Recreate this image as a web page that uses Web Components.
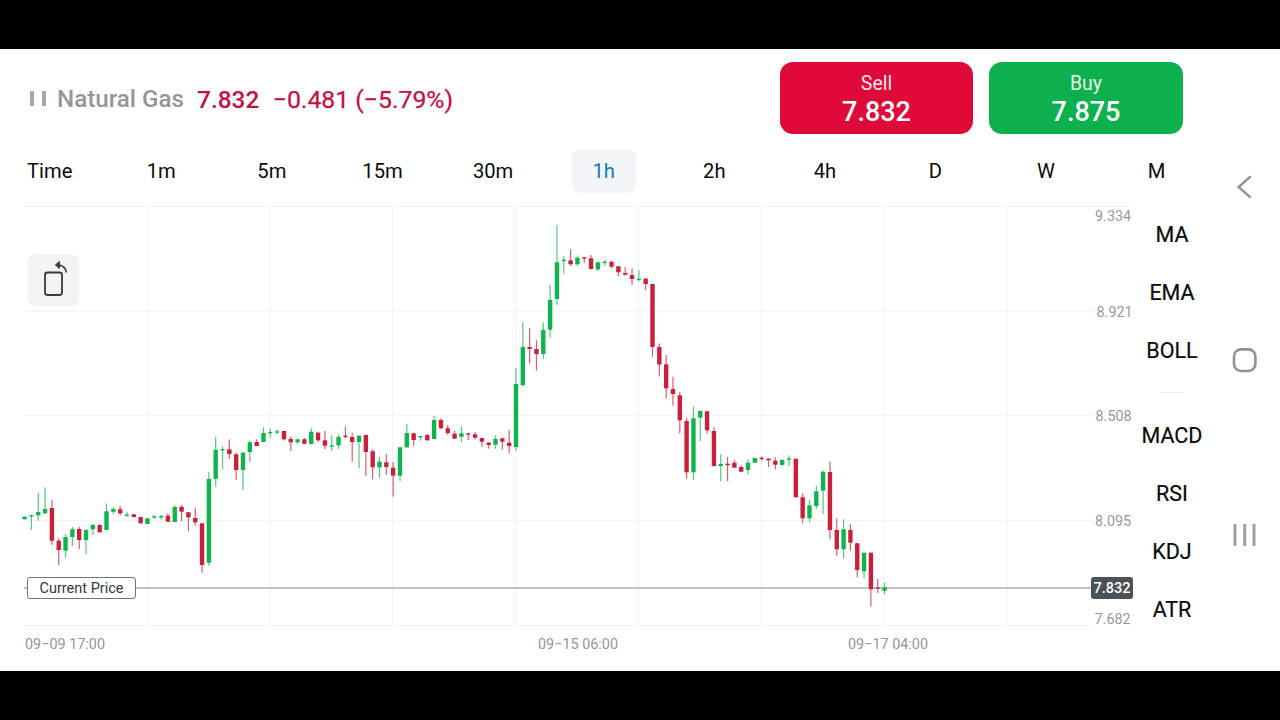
<!DOCTYPE html>
<html>
<head>
<meta charset="utf-8">
<title>Natural Gas</title>
<style>
  html, body { margin: 0; padding: 0; background: #000; }
  body { width: 1280px; height: 720px; overflow: hidden; font-family: Roboto, "Liberation Sans", sans-serif; }
</style>
</head>
<body>
<trade-screen></trade-screen>
<script>
// g/r, wick top, body top, body bottom, wick bottom (screen px), read off the reference
const CANDLES = [
  ['g',516.7,516.7,519.3,519.3],['g',514.7,515,516,530],['g',492.7,512,515.3,520.7],['g',487.3,509,513.3,514],
  ['r',500,508,540.7,545],['r',538.3,540.7,550,565],['g',534,537,550.7,557.7],['g',526.7,529.3,537,546],
  ['r',526.7,529,540,549.3],['g',529.3,530,540,554],['g',524,525,529.3,535],['r',524.3,525,532.3,532.3],
  ['g',503.3,511.3,530,530],['g',507.3,509,511.7,514.3],['r',505.7,509.3,513.3,515.3],['g',512,514.5,515,516.7],
  ['r',514,514.3,517,517.7],['r',516.7,517,523.3,523.7],['g',518,518.3,524,524.3],['g',515,516.3,517,518.7],
  ['g',515,516,516.7,519.7],['r',513.3,515.7,521.7,522],['g',505.3,507,522,522.3],['r',505,507,511.7,521],
  ['r',512,512.3,517.3,531.3],['r',507.7,518,522.3,525.7],['r',523.3,523.3,565,572.7],['g',471.7,479,562.7,566],
  ['g',436.7,449.7,478.7,486.7],['g',446.7,449,449.7,469],['r',439.3,449.3,454,459],['r',452.7,454.3,470,480],
  ['g',451.7,452.7,470,490],['g',440.7,442.3,452,462.3],['r',439.3,442,446,446],['g',427.3,433,442,442.3],
  ['g',428.3,432,432.7,437.7],['g',429,431.3,432,434],['r',431,431,439.3,440.7],['r',436.7,439,442.3,451],
  ['g',439,439.3,442.3,444.3],['r',438,439.3,443.7,444.3],['g',428.3,431.7,444,444.7],['r',431.7,432.7,440.3,442],
  ['r',431,440.3,445.7,449],['g',435.3,445.3,446,450.7],['g',434.3,437,445.3,449],['r',426.7,435.7,437,438.3],
  ['r',432.7,437,442,461.7],['g',435.3,435.7,442,468.3],['r',434.7,435,452,476],['r',449.3,451.3,467.3,479.3],
  ['g',456.7,461.7,467.3,478],['r',454,462.3,467,474.7],['r',462,467.7,475.7,496.7],['g',447.3,447.3,475.7,481.3],
  ['g',424.3,433,447.3,447.7],['r',433,433.3,440,445.7],['g',436,436,436.7,440.7],['r',434,435,440.3,440.7],
  ['g',416,420,439,439.3],['r',418.3,420,428.3,429],['r',425,428.3,433,435.3],['r',430.7,433.7,438.7,439],
  ['g',426.3,433.3,436.7,442],['r',433,433.3,434,440],['r',432,434.3,437.7,439.3],['r',438,438,441.7,446.7],
  ['r',442,442.7,445,448.7],['g',435.3,439,444.7,448.7],['r',437.7,438.3,441.7,449.7],['r',430.3,442.7,446,453.3],
  ['g',368,384,447,451],['g',322.3,347,385,387],['r',328.3,347,349,363.3],['r',340.3,349,354,370.7],
  ['g',322.3,330,354,359],['g',285,300,329.7,337.7],['g',225,262.3,299,305],['g',256.3,259.7,260.7,273.7],
  ['r',249,260.3,264.3,265.7],['g',255.7,257.7,264.3,265.7],['r',257.3,257.3,258.3,262.7],['r',255,258.3,269,269.3],
  ['g',261.3,262.3,269.3,271],['g',259.7,261.7,262.3,265.7],['r',261.3,261.7,266.7,268.3],['r',266,266.3,272.3,276.3],
  ['r',267,273,274.7,275.7],['r',268.3,275,279,285],['g',270.3,278.7,279.7,281],['r',277.7,278.7,284,290],
  ['r',284,284,347,356.7],['r',343.5,347,364.5,376.5],['r',355,364.3,388.3,398.7],['r',376.7,389,394,405.7],
  ['r',392,395.3,420.3,433.3],['r',418.3,421,472.3,478.7],['g',406.7,418.3,472.3,480],['g',411,411,417.7,441.3],
  ['r',410.7,411.3,430.3,433.3],['r',427.3,431,466,466.7],['g',454.3,464,466,481.3],['r',457,463.7,465.3,481.3],
  ['r',460,462.7,467.7,468],['r',465.3,467,471.7,472],['g',459.3,462.7,470,474.7],['g',457.3,458,462.7,463],
  ['r',456.3,457.7,458.7,460.7],['r',458.3,458.7,460.3,467],['r',457.3,460.7,464.7,469.3],['g',459.3,460,465,465.3],
  ['g',455.3,458.3,459.3,466.3],['r',458.7,458.7,497.3,497.3],['r',493.3,497.3,518.3,523.3],['g',500,505.3,518.3,522.3],
  ['g',486,491.3,506,509],['g',470.7,471.7,490.7,514],['r',461.7,472,530,539.3],['r',518.7,530,549.3,556],
  ['g',519.3,529.3,549.3,558.7],['r',524,530,542.7,550.7],['r',543.3,543.3,570,577.3],['g',552.7,552.7,571.3,578.3],
  ['r',552.7,552.7,589.3,606.7],['r',579,587.5,588.5,593],['g',582.7,587.3,590.7,594]
];

class QuoteHeader extends HTMLElement {
  connectedCallback() {
    this.attachShadow({ mode: "open" }).innerHTML = `
      <style>
        :host { display: flex; align-items: center; height: 98px; padding-left: 30px; box-sizing: border-box; }
        .pause { width: 16px; height: 15px; display: flex; justify-content: space-between; margin: 0 11px 0 0; }
        .pause i { width: 3.6px; background: #a8a8a8; }
        .text { display: flex; align-items: center; padding-top: 2px; }
        .name { font-size: 24.2px; font-weight: 500; color: #969696; margin-right: 13px; }
        .price { font-size: 24.4px; font-weight: 500; color: #c4113f; margin-right: 13.5px; }
        .change { font-size: 24.8px; color: #c4113f; -webkit-text-stroke: .25px #c4113f; }
        .btns { margin-left: auto; margin-right: 29px; display: flex; gap: 16px; }
      </style>
      <div class="pause"><i></i><i></i></div>
      <div class="text">
        <span class="name"><slot name="name"></slot></span>
        <span class="price"><slot name="price"></slot></span>
        <span class="change"><slot name="change"></slot></span>
      </div>
      <div class="btns"><slot></slot></div>
    `;
  }
}
customElements.define("quote-header", QuoteHeader);

class TradeButton extends HTMLElement {
  connectedCallback() {
    this.attachShadow({ mode: "open" }).innerHTML = `
      <style>
        :host { display: flex; flex-direction: column; align-items: center; width: ${this.getAttribute("width")}px; height: 72.5px; box-sizing: border-box;
                padding-top: 10px; border-radius: 13px; color: #fff; background: ${this.getAttribute("color")}; }
        .label { font-size: 19.5px; line-height: 23px; color: rgba(255,255,255,.92); }
        .value { font-size: 27px; line-height: 35px; font-weight: 500; }
      </style>
      <span class="label">${this.getAttribute("label")}</span>
      <span class="value">${this.getAttribute("value")}</span>
    `;
  }
}
customElements.define("trade-button", TradeButton);

class TimeTabs extends HTMLElement {
  connectedCallback() {
    const active = this.getAttribute("active");
    const tabs = this.getAttribute("items").split(",");
    this.attachShadow({ mode: "open" }).innerHTML = `
      <style>
        :host { display: grid; grid-template-columns: 79px repeat(10, 110.6px); height: 48px; padding-left: 27px; align-items: center; }
        span { font-size: 20.2px; line-height: 44px; height: 44px; text-align: center; color: #0b0b0b; justify-self: center; }
        span:first-of-type { justify-self: start; }
        .on { width: 64px; background: #f4f5f7; border-radius: 9px; color: #1976c5; }
      </style>
      ${tabs.map(t => `<span class="${t === active ? "on" : ""}">${t}</span>`).join("")}
    `;
  }
}
customElements.define("time-tabs", TimeTabs);

class CandleChart extends HTMLElement {
  connectedCallback() {
    const GREEN = "#0fb44e", RED = "#c9213c";
    let grid = "";
    [206.5, 311, 415.5, 520.5, 625.5].forEach(y => { grid += `<line x1="24" x2="1133" y1="${y}" y2="${y}"/>`; });
    [147, 269.5, 392.5, 515.5, 638.5, 761, 884, 1007].forEach(x => { grid += `<line x1="${x}" x2="${x}" y1="206" y2="626"/>`; });
    let bars = "";
    CANDLES.forEach((c, i) => {
      const x = 24.6 + 6.825 * i;
      const col = c[0] === "g" ? GREEN : RED;
      const h = Math.max(c[3] - c[2], 1.4);
      const w = c[3] - c[2] < 1.6 ? 4 : 4.4;
      bars += `<rect x="${(x - .6).toFixed(2)}" y="${c[1]}" width="1.2" height="${(c[4] - c[1]).toFixed(1)}" fill="${col}" opacity=".72"/>`;
      bars += `<rect x="${(x - w / 2).toFixed(2)}" y="${c[2]}" width="${w}" height="${h.toFixed(1)}" fill="${col}"/>`;
    });
    const ticks = [["9.334", 216, 1131], ["8.921", 311.5, 1132.5], ["8.508", 416, 1131.5], ["8.095", 521, 1131], ["7.682", 618.5, 1130.5]];
    this.attachShadow({ mode: "open" }).innerHTML = `
      <style>
        :host { display: block; position: relative; width: 1133px; height: 435px; flex: none; }
        svg { display: block; }
        .grid line { stroke: #f1f2f3; stroke-width: 1; }
        .bars { filter: blur(.35px); }
        .tick { position: absolute; font-size: 14.3px; line-height: 16px; color: #999; background: #fff; padding-left: 2px; }
        .now { position: absolute; left: 27px; top: 382px; width: 109px; height: 22px; box-sizing: border-box; text-align: center;
               border: 1px solid #70757a; border-radius: 3px; background: #fff; color: #33383c; font-size: 14.5px; line-height: 21px; }
        .tag { position: absolute; left: 1091px; top: 382px; width: 42px; height: 22px; border-radius: 3px; text-align: center;
               background: #4b5157; color: #fff; font-size: 14.5px; font-weight: 500; line-height: 23px; }
        .flip { position: absolute; left: 28px; top: 59px; width: 51px; height: 52px; border-radius: 8px; background: #f3f3f3; }
      </style>
      <svg width="1133" height="435" viewBox="0 195 1133 435">
        <g class="grid">${grid}</g>
        <line x1="24" x2="1091" y1="588" y2="588" stroke="#85888b" stroke-width="1.2"/>
        <g class="bars">${bars}</g>
      </svg>
      ${ticks.map(t => `<span class="tick" style="right:${1133 - t[2]}px;top:${t[1] - 195 - 8}px">${t[0]}</span>`).join("")}
      <span class="now">Current Price</span>
      <span class="tag">7.832</span>
      <div class="flip">
        <svg width="51" height="52" viewBox="28 254 51 52" fill="none" stroke="#3a3a3a">
          <rect x="45" y="272.5" width="17" height="22.5" rx="2.5" stroke-width="1.8"/>
          <path d="M66.3 272.6C66.2 268 62.5 265 57.5 265" stroke-width="1.7"/>
          <path d="M59.4 261.5L55.4 265L59.4 268.5Z" fill="#3a3a3a" stroke-width="1"/>
        </svg>
      </div>
    `;
  }
}
customElements.define("candle-chart", CandleChart);

class IndicatorList extends HTMLElement {
  connectedCallback() {
    const groups = this.getAttribute("items").split("|").map(g => g.split(","));
    const row = n => `<span>${n}</span>`;
    this.attachShadow({ mode: "open" }).innerHTML = `
      <style>
        :host { display: flex; flex-direction: column; align-items: center; width: 78px; padding-top: 11px; box-sizing: border-box; }
        span { height: 57.8px; flex: none; line-height: 58px; font-size: 21.5px; color: #0a0a0a; -webkit-text-stroke: .2px #0a0a0a; }
        hr { width: 24px; height: 1px; border: 0; background: #f0f0f0; margin: 13px 0 14px; flex: none; }
      </style>
      ${groups[0].map(row).join("")}<hr>${groups[1].map(row).join("")}
    `;
  }
}
customElements.define("indicator-list", IndicatorList);

class NavRail extends HTMLElement {
  connectedCallback() {
    this.attachShadow({ mode: "open" }).innerHTML = `
      <style>
        :host { display: flex; flex-direction: column; width: 66px; padding-top: 51px; box-sizing: border-box; }
        div { height: 174px; display: flex; align-items: center; justify-content: center; }
        svg { fill: none; stroke: #929292; display: block; }
      </style>
      <div><svg width="30" height="30" viewBox="0 0 30 30"><path d="M20.7 4.3L8.6 15L20.7 25.7" stroke-width="2.4"/></svg></div>
      <div><svg width="30" height="30" viewBox="0 0 30 30"><rect x="4" y="3.4" width="21.4" height="21.6" rx="7" stroke-width="2.6"/></svg></div>
      <div><svg width="30" height="30" viewBox="0 0 30 30"><path d="M5 4V26M14.7 4V26M24 4V26" stroke-width="3" stroke="#a0a0a0"/></svg></div>
    `;
  }
}
customElements.define("nav-rail", NavRail);

class TradeScreen extends HTMLElement {
  connectedCallback() {
    this.attachShadow({ mode: "open" }).innerHTML = `
      <style>
        :host { display: flex; flex-direction: column; width: 1280px; height: 720px; background: #000; }
        .bar { height: 49px; flex: none; background: #000; }
        .panel { height: 622px; display: flex; background: #fff; }
        .main { width: 1212px; display: flex; flex-direction: column; }
        .row { display: flex; height: 435px; }
        .dates { display: flex; padding: 7px 0 0 25px; font-size: 14.4px; line-height: 16px; color: #969696; }
        .dates span:nth-child(1) { width: 513px; }
        .dates span:nth-child(2) { width: 310px; }
      </style>
      <div class="bar"></div>
      <div class="panel">
        <div class="main">
          <quote-header>
            <span slot="name">Natural Gas</span>
            <span slot="price">7.832</span>
            <span slot="change">−0.481 (−5.79%)</span>
            <trade-button label="Sell" value="7.832" color="#e00a3a" width="193"></trade-button>
            <trade-button label="Buy" value="7.875" color="#0cb14d" width="194"></trade-button>
          </quote-header>
          <time-tabs items="Time,1m,5m,15m,30m,1h,2h,4h,D,W,M" active="1h"></time-tabs>
          <div class="row">
            <candle-chart></candle-chart>
            <indicator-list items="MA,EMA,BOLL|MACD,RSI,KDJ,ATR"></indicator-list>
          </div>
          <div class="dates"><span>09−09 17:00</span><span>09−15 06:00</span><span>09−17 04:00</span></div>
        </div>
        <nav-rail></nav-rail>
      </div>
      <div class="bar"></div>
    `;
  }
}
customElements.define("trade-screen", TradeScreen);
</script>
</body>
</html>
